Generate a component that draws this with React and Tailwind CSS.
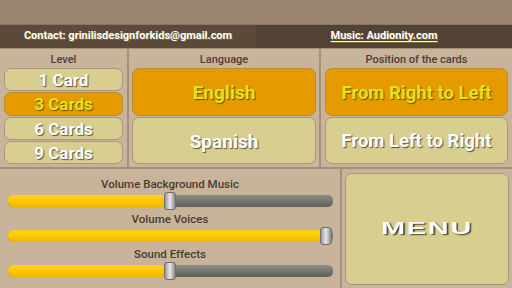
import React from "react";

const font = { fontFamily: "Roboto, 'Noto Sans', sans-serif" };

function OptBtn({ label, active, size }) {
  return (
    <div
      className={`flex-1 min-h-0 leading-none pt-[2px] flex items-center justify-center rounded-[7px] border font-bold ${size} ${
        active
          ? "bg-[#e59a00] border-[#b88a3a] text-[#e4e21c] [text-shadow:1px_1px_1px_rgba(70,50,0,0.75)]"
          : "bg-[#d7ce8f] border-[#a8977a] text-white [text-shadow:1px_1px_1px_rgba(60,50,40,0.8)]"
      }`}
    >
      {label}
    </div>
  );
}

function Slider({ label, pct }) {
  return (
    <div className="flex flex-col items-center">
      <div className="text-[11.5px] font-medium text-[#4a3d30] leading-[14px] h-[14px]">{label}</div>
      <div className="relative w-[325px] h-[12px] mt-[4px] rounded-[5px] bg-gradient-to-b from-[#8d8d86] via-[#777771] to-[#5f5f5a]">
        <div
          className="absolute left-0 top-0 h-full rounded-l-[5px] bg-gradient-to-b from-[#ffd21a] via-[#ffc800] to-[#f0b400]"
          style={{ width: `${pct}%` }}
        />
        <div
          className="absolute top-[-3px] w-[12px] h-[18px] rounded-[3px] border border-[#6e6e6e] bg-gradient-to-r from-[#9a9a9a] via-[#e8e8e8] to-[#8a8a8a]"
          style={{ left: `calc(${pct}% - 6px)` }}
        />
      </div>
    </div>
  );
}

export default function App() {
  return (
    <div className="w-[512px] h-[288px] flex flex-col bg-[#9a8670] overflow-hidden" style={font}>
      <div className="h-[25px] shrink-0 bg-[#9a8670] border-b border-[#8a7660]" />
      <div className="h-[23px] shrink-0 flex text-white font-bold text-[11px] [text-shadow:1px_1px_0_#7a6a2c]">
        <div className="w-[256px] bg-[#5b4939] flex items-center justify-center">
          Contact: grinilisdesignforkids@gmail.com
        </div>
        <div className="flex-1 bg-[#514235] flex items-center justify-center">
          <span className="underline underline-offset-2">Music: Audionity.com</span>
        </div>
      </div>
      <div className="flex-1 min-h-0 flex flex-col gap-[2px] bg-[#a58f78] pt-[1px]">
        <div className="h-[118px] shrink-0 flex gap-[2px]">
          <div className="w-[127px] bg-[#c8b39b] flex flex-col px-[4px] pb-[3px]">
            <div className="text-[11px] font-medium text-[#4b3f33] text-center h-[19px] leading-[22px]">Level</div>
            <div className="flex-1 min-h-0 flex flex-col gap-[1px]">
              <OptBtn label="1 Card" size="text-[17px]" />
              <OptBtn label="3 Cards" active size="text-[17px]" />
              <OptBtn label="6 Cards" size="text-[17px]" />
              <OptBtn label="9 Cards" size="text-[17px]" />
            </div>
          </div>
          <div className="w-[190px] bg-[#c8b39b] flex flex-col px-[3px] pb-[3px]">
            <div className="text-[11px] font-medium text-[#4b3f33] text-center h-[19px] leading-[22px]">Language</div>
            <div className="flex-1 min-h-0 flex flex-col gap-[1px]">
              <OptBtn label="English" active size="text-[19px]" />
              <OptBtn label="Spanish" size="text-[19px]" />
            </div>
          </div>
          <div className="flex-1 bg-[#c8b39b] flex flex-col px-[4px] pb-[3px]">
            <div className="text-[11px] font-medium text-[#4b3f33] text-center h-[19px] leading-[22px]">Position of the cards</div>
            <div className="flex-1 min-h-0 flex flex-col gap-[1px]">
              <OptBtn label="From Right to Left" active size="text-[18.5px]" />
              <OptBtn label="From Left to Right" size="text-[18.5px]" />
            </div>
          </div>
        </div>
        <div className="flex-1 min-h-0 flex gap-[2px]">
          <div className="w-[340px] bg-[#c8b39b] flex flex-col items-center pt-[8px] gap-[5px]">
            <Slider label="Volume Background Music" pct={50} />
            <Slider label="Volume Voices" pct={98} />
            <Slider label="Sound Effects" pct={50} />
          </div>
          <div className="flex-1 bg-[#c8b39b] px-[3px] pt-[4px] pb-[3px]">
            <div className="w-full h-full rounded-[7px] border border-[#a8977a] bg-[#d7ce8f] flex items-center justify-center">
              <span
                className="text-white font-bold text-[17px] tracking-[1px] scale-x-[1.7] [text-shadow:1px_1px_1px_rgba(50,40,30,0.85)]"
                style={{ fontFamily: "'Liberation Sans', Arial, sans-serif" }}
              >
                MENU
              </span>
            </div>
          </div>
        </div>
      </div>
    </div>
  );
}
